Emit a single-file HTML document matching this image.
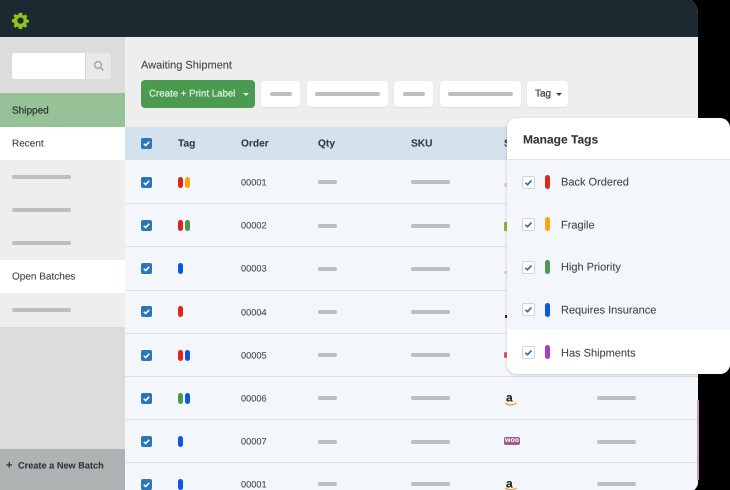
<!DOCTYPE html>
<html><head><meta charset="utf-8"><style>
html,body{margin:0;padding:0;background:#000;overflow:hidden}
body{width:730px;height:490px;position:relative;font-family:"Liberation Sans",sans-serif;text-rendering:geometricPrecision}
#w{position:absolute;left:0;top:0;width:730px;height:500px;filter:blur(.35px)}
.a{position:absolute}
.t{position:absolute;white-space:nowrap;line-height:14px;font-size:10px;color:#3c4247;transform:translateY(-6.5px);-webkit-text-stroke:.1px #3c4247}
.h{font-weight:bold;font-size:10.2px;color:#333b40}
.n{font-size:9.2px;color:#4b5055}
.bar{position:absolute;height:4px;border-radius:2px;background:#bcbfc1}
.sep{position:absolute;left:125px;width:573px;height:1px;background:#dfe3e7}
.cb{position:absolute;left:141px;width:11px;height:11px;border-radius:2px;background:#2a76b9}
.cb svg,.mc svg{position:absolute;left:0;top:0}
.pill{position:absolute;width:5px;height:11px;border-radius:2.5px}
.btn{position:absolute;top:81px;height:26px;background:#fff;border-radius:4px;box-shadow:0 1px 1px #dcdcdc}
.mc{position:absolute;left:522px;width:13px;height:13px;box-sizing:border-box;border:1px solid #d3d5d8;border-radius:2px;background:#fff}
.m{position:absolute;left:561px;font-size:11px;line-height:14px;color:#42484d;white-space:nowrap;transform:translateY(-6.5px);-webkit-text-stroke:.1px #42484d}
.mp{position:absolute;left:545px;width:5px;height:14px;border-radius:2.5px}
.red{background:#e1251b}.org{background:#fca311}.grn{background:#4a9b50}.blu{background:#0f56e8}
</style></head><body><div id="w">
<div class="a" style="left:-5px;top:-5px;width:703px;height:497px;background:#eee;border-radius:0 19px 10px 0;overflow:hidden">
 <div class="a" style="left:0;top:0;width:703px;height:42px;background:#1d2930"></div>
 <div class="a" style="left:0;top:42px;width:130px;height:460px;background:#dcdcdc"></div>
 <div class="a" style="left:0;top:98px;width:130px;height:34px;background:#97c196"></div>
 <div class="a" style="left:0;top:132px;width:130px;height:33px;background:#fff"></div>
 <div class="a" style="left:0;top:165px;width:130px;height:167px;background:#eeeeee"></div>
 <div class="a" style="left:0;top:265px;width:130px;height:33px;background:#fff"></div>
 <div class="a" style="left:0;top:454px;width:130px;height:50px;background:#b0b3b4"></div>
 <div class="a" style="left:130px;top:132px;width:573px;height:33px;background:#d4e2ee"></div>
 <div class="a" style="left:130px;top:165px;width:573px;height:340px;background:#f3f6fa"></div>
</div>

<svg class="a" style="left:12px;top:12px" width="17" height="17" viewBox="0 0 19 19"><path fill="#8fc31f" fill-rule="evenodd" d="M7.600 1h3.800l.5 2.400 1.300.6 2.100-1.300 1.900 2.100-1.300 2 .5 1.400 2.400.5v3l-2.400.5-.6 1.400 1.300 2-2 2-2-1.300-1.400.6-.5 2.400H7.600l-.5-2.400-1.400-.6-2 1.300-2-2 1.300-2-.6-1.400L0 11.200v-3l2.400-.5.5-1.400-1.300-2 2-2.100 2 1.300 1.400-.6zM9.500 6.100a3.500 3.500 0 1 0 0 7 3.500 3.500 0 0 0 0-7z"/></svg>

<div class="a" style="left:12px;top:53px;width:73px;height:26px;background:#fff;border-radius:3px 0 0 3px"></div>
<div class="a" style="left:85px;top:53px;width:26px;height:26px;background:#e9e9e9;border-left:1px solid #d6d6d6;box-sizing:border-box;border-radius:0 3px 3px 0"></div>
<svg class="a" style="left:93px;top:60px" width="12" height="12" viewBox="0 0 12 12" fill="none" stroke="#a3a6a8" stroke-width="1.500"><circle cx="5" cy="5" r="3.400"/><path d="M7.500 7.500l3 3"/></svg>

<div class="t" style="left:12px;top:111px;color:#2d3a36;-webkit-text-stroke:.25px #2d3a36">Shipped</div>
<div class="t" style="left:12px;top:144px">Recent</div>
<div class="bar" style="left:12px;top:175px;width:59px"></div>
<div class="bar" style="left:12px;top:208px;width:59px"></div>
<div class="bar" style="left:12px;top:241px;width:59px"></div>
<div class="t" style="left:12px;top:277px">Open Batches</div>
<div class="bar" style="left:12px;top:308px;width:59px"></div>
<div class="t" style="left:6px;top:465px;color:#2f3437;font-weight:bold;font-size:11px">+</div>
<div class="t" style="left:18px;top:465px;color:#2f3437;font-weight:bold;font-size:9.2px">Create a New Batch</div>

<div class="t" style="left:141px;top:65px;font-size:11px;color:#3f4549">Awaiting Shipment</div>
<div class="a" style="left:141px;top:80px;width:114px;height:28px;background:#4a9b50;border-radius:4px"></div>
<div class="t" style="left:149px;top:94px;color:#dcefdc;font-size:9.7px;-webkit-text-stroke:.25px #dcefdc">Create + Print Label</div>
<div class="a" style="left:243px;top:93px;width:0;height:0;border:3px solid transparent;border-top:3px solid #dcefdc;border-bottom:0"></div>

<div class="btn" style="left:261px;width:39px"></div><div class="bar" style="left:270px;top:92px;width:22px"></div>
<div class="btn" style="left:307px;width:81px"></div><div class="bar" style="left:315px;top:92px;width:65px"></div>
<div class="btn" style="left:394px;width:39px"></div><div class="bar" style="left:403px;top:92px;width:22px"></div>
<div class="btn" style="left:440px;width:81px"></div><div class="bar" style="left:448px;top:92px;width:65px"></div>
<div class="btn" style="left:527px;width:41px"></div>
<div class="t" style="left:535px;top:94px;color:#3b4146;-webkit-text-stroke:.25px #3b4146">Tag</div>
<div class="a" style="left:556px;top:93px;width:0;height:0;border:3px solid transparent;border-top:3px solid #3b4146;border-bottom:0"></div>

<!-- table header -->
<div class="cb" style="top:138px"><svg width="11" height="11" viewBox="0 0 11 11" fill="none" stroke="#fff" stroke-width="1.600"><path d="M2.800 5.800l1.900 1.700 3.500-3.700"/></svg></div>
<div class="t h" style="left:178px;top:144px">Tag</div>
<div class="t h" style="left:241px;top:144px">Order</div>
<div class="t h" style="left:318px;top:144px">Qty</div>
<div class="t h" style="left:411px;top:144px">SKU</div>
<div class="t h" style="left:504px;top:144px">S</div>

<!-- separators -->
<div class="sep" style="top:203px"></div><div class="sep" style="top:246px"></div><div class="sep" style="top:290px"></div><div class="sep" style="top:333px"></div><div class="sep" style="top:376px"></div><div class="sep" style="top:419px"></div><div class="sep" style="top:462px"></div>

<!-- rows -->
<div class="cb" style="top:177px"><svg width="11" height="11" viewBox="0 0 11 11" fill="none" stroke="#fff" stroke-width="1.600"><path d="M2.800 5.800l1.900 1.700 3.500-3.700"/></svg></div>
<div class="cb" style="top:220px"><svg width="11" height="11" viewBox="0 0 11 11" fill="none" stroke="#fff" stroke-width="1.600"><path d="M2.800 5.800l1.900 1.700 3.500-3.700"/></svg></div>
<div class="cb" style="top:263px"><svg width="11" height="11" viewBox="0 0 11 11" fill="none" stroke="#fff" stroke-width="1.600"><path d="M2.800 5.800l1.900 1.700 3.500-3.700"/></svg></div>
<div class="cb" style="top:306px"><svg width="11" height="11" viewBox="0 0 11 11" fill="none" stroke="#fff" stroke-width="1.600"><path d="M2.800 5.800l1.900 1.700 3.500-3.700"/></svg></div>
<div class="cb" style="top:350px"><svg width="11" height="11" viewBox="0 0 11 11" fill="none" stroke="#fff" stroke-width="1.600"><path d="M2.800 5.800l1.900 1.700 3.500-3.700"/></svg></div>
<div class="cb" style="top:393px"><svg width="11" height="11" viewBox="0 0 11 11" fill="none" stroke="#fff" stroke-width="1.600"><path d="M2.800 5.800l1.900 1.700 3.500-3.700"/></svg></div>
<div class="cb" style="top:436px"><svg width="11" height="11" viewBox="0 0 11 11" fill="none" stroke="#fff" stroke-width="1.600"><path d="M2.800 5.800l1.900 1.700 3.500-3.700"/></svg></div>
<div class="cb" style="top:479px"><svg width="11" height="11" viewBox="0 0 11 11" fill="none" stroke="#fff" stroke-width="1.600"><path d="M2.800 5.800l1.900 1.700 3.500-3.700"/></svg></div>

<div class="pill red" style="left:178px;top:177px"></div><div class="pill org" style="left:185px;top:177px"></div>
<div class="pill red" style="left:178px;top:220px"></div><div class="pill grn" style="left:185px;top:220px"></div>
<div class="pill blu" style="left:178px;top:263px"></div>
<div class="pill red" style="left:178px;top:306px"></div>
<div class="pill red" style="left:178px;top:350px"></div><div class="pill blu" style="left:185px;top:350px"></div>
<div class="pill grn" style="left:178px;top:393px"></div><div class="pill blu" style="left:185px;top:393px"></div>
<div class="pill blu" style="left:178px;top:436px"></div>
<div class="pill blu" style="left:178px;top:479px"></div>

<div class="t n" style="left:241px;top:182px">00001</div>
<div class="t n" style="left:241px;top:225px">00002</div>
<div class="t n" style="left:241px;top:268px">00003</div>
<div class="t n" style="left:241px;top:312px">00004</div>
<div class="t n" style="left:241px;top:355px">00005</div>
<div class="t n" style="left:241px;top:398px">00006</div>
<div class="t n" style="left:241px;top:441px">00007</div>
<div class="t n" style="left:241px;top:484px">00001</div>

<div class="bar" style="left:318px;top:180px;width:19px"></div><div class="bar" style="left:411px;top:180px;width:39px"></div>
<div class="bar" style="left:318px;top:224px;width:19px"></div><div class="bar" style="left:411px;top:224px;width:39px"></div>
<div class="bar" style="left:318px;top:267px;width:19px"></div><div class="bar" style="left:411px;top:267px;width:39px"></div>
<div class="bar" style="left:318px;top:310px;width:19px"></div><div class="bar" style="left:411px;top:310px;width:39px"></div>
<div class="bar" style="left:318px;top:353px;width:19px"></div><div class="bar" style="left:411px;top:353px;width:39px"></div>
<div class="bar" style="left:318px;top:396px;width:19px"></div><div class="bar" style="left:411px;top:396px;width:39px"></div>
<div class="bar" style="left:318px;top:440px;width:19px"></div><div class="bar" style="left:411px;top:440px;width:39px"></div>
<div class="bar" style="left:318px;top:482px;width:19px"></div><div class="bar" style="left:411px;top:482px;width:39px"></div>
<div class="bar" style="left:597px;top:396px;width:39px"></div>
<div class="bar" style="left:597px;top:440px;width:39px"></div>
<div class="bar" style="left:597px;top:482px;width:39px"></div>

<!-- peeking logos -->
<div class="a" style="left:504px;top:183px;width:4px;height:4px;border-radius:2px;background:#f2cfa6"></div>
<div class="a" style="left:504px;top:222px;width:3px;height:9px;background:#8dbb2e"></div>
<div class="a" style="left:504px;top:271px;width:4px;height:3px;border-radius:2px;background:#efd19c"></div>
<div class="a" style="left:505px;top:315px;width:3px;height:3px;background:#222"></div>
<div class="a" style="left:504px;top:352px;width:3px;height:6px;border-radius:2px;background:#e0525d"></div>

<!-- amazon -->
<div class="t" style="left:506px;top:397px;font:bold 12px/14px 'Liberation Sans',sans-serif;color:#1c1c1c">a</div>
<svg class="a" style="left:504px;top:401px" width="14" height="6" viewBox="0 0 14 6" fill="none" stroke="#f09a1c" stroke-width="1.300"><path d="M1 2c3.500 2.400 8 2.400 11.500 0"/></svg>
<div class="t" style="left:506px;top:483px;font:bold 12px/14px 'Liberation Sans',sans-serif;color:#1c1c1c">a</div>
<svg class="a" style="left:504px;top:487px" width="14" height="6" viewBox="0 0 14 6" fill="none" stroke="#f09a1c" stroke-width="1.300"><path d="M1 1c3.500 2.400 8 2.400 11.500 0"/></svg>
<!-- woo -->
<div class="a" style="left:504px;top:437px;width:16px;height:8px;background:#9b5c8f;border-radius:2px;color:#fff;font:bold 7px/8px 'Liberation Sans',sans-serif;text-align:center">woo</div>

<div class="a" style="left:697px;top:400px;width:1.5px;height:80px;background:#c89ab8"></div>

<!-- popover -->
<div class="a" style="left:507px;top:118px;width:223px;height:256px;background:#f3f6fa;border-radius:10px;box-shadow:0 1px 3px rgba(0,0,0,.18);overflow:hidden">
 <div class="a" style="left:0;top:0;width:223px;height:41px;background:#fff;border-bottom:1px solid #e2e4e6"></div>
 <div class="a" style="left:0;top:212px;width:223px;height:44px;background:#fff"></div>
</div>
<div class="t" style="left:523px;top:139px;font-size:12px;font-weight:bold;color:#2f353a">Manage Tags</div>

<div class="mc" style="top:176px"><svg width="11" height="11" viewBox="0 0 11 11" fill="none" stroke="#2a76b9" stroke-width="1.700"><path d="M2.300 5.900l2.200 1.800 4-4.200"/></svg></div>
<div class="mp" style="top:175px;background:#e1251b"></div><div class="m" style="top:182px">Back Ordered</div>
<div class="mc" style="top:218px"><svg width="11" height="11" viewBox="0 0 11 11" fill="none" stroke="#2a76b9" stroke-width="1.700"><path d="M2.300 5.900l2.200 1.800 4-4.200"/></svg></div>
<div class="mp" style="top:217px;background:#fca311"></div><div class="m" style="top:225px">Fragile</div>
<div class="mc" style="top:261px"><svg width="11" height="11" viewBox="0 0 11 11" fill="none" stroke="#2a76b9" stroke-width="1.700"><path d="M2.300 5.900l2.200 1.800 4-4.200"/></svg></div>
<div class="mp" style="top:260px;background:#4a9b50"></div><div class="m" style="top:267px">High Priority</div>
<div class="mc" style="top:303px"><svg width="11" height="11" viewBox="0 0 11 11" fill="none" stroke="#2a76b9" stroke-width="1.700"><path d="M2.300 5.900l2.200 1.800 4-4.200"/></svg></div>
<div class="mp" style="top:303px;background:#0f56e8"></div><div class="m" style="top:310px">Requires Insurance</div>
<div class="mc" style="top:346px"><svg width="11" height="11" viewBox="0 0 11 11" fill="none" stroke="#2a76b9" stroke-width="1.700"><path d="M2.300 5.900l2.200 1.800 4-4.200"/></svg></div>
<div class="mp" style="top:345px;background:#a93cbf"></div><div class="m" style="top:353px">Has Shipments</div>
</div></body></html>
